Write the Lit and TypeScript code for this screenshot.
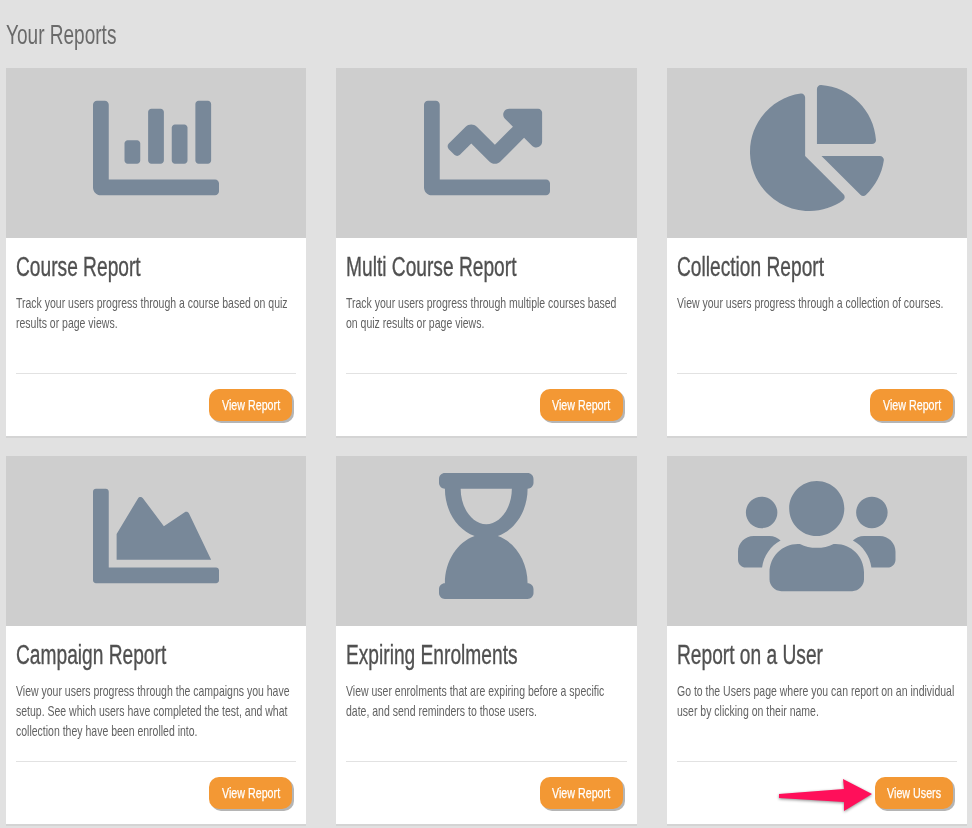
import { LitElement, html, css, svg } from "lit";
import { customElement } from "lit/decorators.js";

const ICONS: Record<string, { vb: number; d: string }> = {
  bar: { vb: 512, d: "M332.8 320h38.4c6.4 0 12.8-6.4 12.8-12.8V172.8c0-6.4-6.4-12.8-12.8-12.8h-38.4c-6.4 0-12.8 6.4-12.8 12.8v134.4c0 6.4 6.4 12.8 12.8 12.8zm96 0h38.4c6.4 0 12.8-6.4 12.8-12.8V76.8c0-6.4-6.4-12.8-12.8-12.8h-38.4c-6.4 0-12.8 6.4-12.8 12.8v230.4c0 6.4 6.4 12.8 12.8 12.8zm-288 0h38.4c6.4 0 12.8-6.4 12.8-12.8v-70.4c0-6.4-6.4-12.8-12.8-12.8h-38.4c-6.4 0-12.8 6.4-12.8 12.8v70.4c0 6.4 6.4 12.8 12.8 12.8zm96 0h38.4c6.4 0 12.8-6.4 12.8-12.8V108.8c0-6.4-6.4-12.8-12.8-12.8h-38.4c-6.4 0-12.8 6.4-12.8 12.8v198.4c0 6.4 6.4 12.8 12.8 12.8zM496 384H64V80c0-8.84-7.16-16-16-16H16C7.16 64 0 71.16 0 80v336c0 17.67 14.33 32 32 32h464c8.84 0 16-7.16 16-16v-32c0-8.84-7.16-16-16-16z" },
  line: { vb: 512, d: "M496 384H64V80c0-8.84-7.16-16-16-16H16C7.16 64 0 71.16 0 80v336c0 17.67 14.33 32 32 32h464c8.84 0 16-7.16 16-16v-32c0-8.84-7.16-16-16-16zM464 96H345.94c-21.38 0-32.09 25.85-16.97 40.97l32.4 32.4L288 242.75l-73.37-73.37c-12.5-12.5-32.76-12.5-45.25 0l-68.69 68.69c-6.25 6.25-6.25 16.38 0 22.63l22.62 22.62c6.25 6.25 16.38 6.25 22.63 0L192 237.25l73.37 73.37c12.5 12.5 32.76 12.5 45.25 0l96-96 32.4 32.4c15.12 15.12 40.97 4.41 40.97-16.97V112c.01-8.84-7.15-16-15.99-16z" },
  pie: { vb: 544, d: "M527.79 288H290.5l158.03 158.03c6.04 6.04 15.98 6.53 22.19.68 38.7-36.46 65.32-85.61 73.13-140.86 1.34-9.46-6.51-17.85-16.06-17.85zm-15.83-64.8C503.72 103.74 408.26 8.28 288.8.04 279.68-.59 272 7.1 272 16.24V240h223.77c9.14 0 16.82-7.68 16.19-16.8zM224 288V50.71c0-9.55-8.39-17.4-17.84-16.06C86.99 51.49-4.1 155.6.14 280.37 4.5 408.51 114.83 513.59 243.03 511.98c50.4-.63 96.97-16.87 135.26-44.03 7.9-5.6 8.42-17.23 1.57-24.08L224 288z" },
  area: { vb: 512, d: "M500 384c6.6 0 12 5.4 12 12v40c0 6.6-5.4 12-12 12H12c-6.6 0-12-5.4-12-12V76c0-6.6 5.4-12 12-12h40c6.6 0 12 5.4 12 12v308h436zM372.7 159.5L288 216l-85.3-113.7c-5.1-6.8-15.5-6.3-19.9 1L96 248v104h384l-89.9-187.8c-3.2-6.5-11.4-8.7-17.4-4.7z" },
  hourglass: { vb: 384, d: "M360 64c13.255 0 24-10.745 24-24V24c0-13.255-10.745-24-24-24H24C10.745 0 0 10.745 0 24v16c0 13.255 10.745 24 24 24 0 90.965 51.016 167.734 120.842 192C75.016 280.266 24 357.035 24 448c-13.255 0-24 10.745-24 24v16c0 13.255 10.745 24 24 24h336c13.255 0 24-10.745 24-24v-16c0-13.255-10.745-24-24-24 0-90.965-51.016-167.734-120.842-192C308.984 231.734 360 154.965 360 64zM192 208c-57.787 0-104-66.518-104-144h208c0 77.945-46.51 144-104 144z" },
  users: { vb: 640, d: "M96 224c35.3 0 64-28.7 64-64s-28.7-64-64-64-64 28.7-64 64 28.7 64 64 64zm448 0c35.3 0 64-28.7 64-64s-28.7-64-64-64-64 28.7-64 64 28.7 64 64 64zm32 32h-64c-17.6 0-33.5 7.1-45.1 18.6 40.3 22.1 68.9 62 75.1 109.4h66c17.7 0 32-14.3 32-32v-32c0-35.3-28.7-64-64-64zm-256 0c61.9 0 112-50.1 112-112S381.9 32 320 32 208 82.1 208 144s50.1 112 112 112zm76.8 32h-8.3c-20.8 10-43.9 16-68.5 16s-47.6-6-68.5-16h-8.3C179.6 288 128 339.6 128 403.2V432c0 26.5 21.5 48 48 48h288c26.5 0 48-21.5 48-48v-28.8c0-63.6-51.6-115.2-115.2-115.2zm-223.7-13.4C161.5 263.1 145.6 256 128 256H64c-35.3 0-64 28.7-64 64v32c0 17.7 14.3 32 32 32h65.9c6.3-47.4 34.9-87.3 75.2-109.4z" },
};

const CARDS = [
  { icon: "bar", title: "Course Report", text: "Track your users progress through a course based on quiz results or page views.", action: "View Report", w: 83 },
  { icon: "line", title: "Multi Course Report", text: "Track your users progress through multiple courses based on quiz results or page views.", action: "View Report", w: 83 },
  { icon: "pie", title: "Collection Report", text: "View your users progress through a collection of courses.", action: "View Report", w: 83 },
  { icon: "area", title: "Campaign Report", text: "View your users progress through the campaigns you have setup. See which users have completed the test, and what collection they have been enrolled into.", action: "View Report", w: 83 },
  { icon: "hourglass", title: "Expiring Enrolments", text: "View user enrolments that are expiring before a specific date, and send reminders to those users.", action: "View Report", w: 83 },
  { icon: "users", title: "Report on a User", text: "Go to the Users page where you can report on an individual user by clicking on their name.", action: "View Users", w: 78 },
];

@customElement("app-root")
export class AppRoot extends LitElement {
  static styles = css`
    :host {
      display: block;
      position: relative;
      height: 828px;
      overflow: hidden;
      background: #e1e1e1;
      font-family: "Liberation Sans", Arial, sans-serif;
    }
    h1 {
      margin: 0;
      padding: 19px 0 0 6px;
      height: 68px;
      box-sizing: border-box;
      font-size: 28px;
      line-height: 32px;
      font-weight: 400;
      color: #6a6a6a;
    }
    h1 span {
      display: inline-block;
      white-space: nowrap;
      transform: scaleX(0.68);
      transform-origin: left center;
    }
    .grid {
      display: grid;
      grid-template-columns: repeat(3, 300.45px);
      column-gap: 30px;
      row-gap: 20px;
      padding: 0 0 0 6px;
    }
    .card {
      display: flex;
      flex-direction: column;
      height: 368px;
      background: #fff;
      box-shadow: 0 2px 0 #d4d4d4;
    }
    .pic {
      height: 170px;
      padding-top: 17px;
      box-sizing: border-box;
      background: #cecece;
      display: flex;
      justify-content: center;
      align-items: flex-start;
    }
    .pic svg {
      height: 126px;
      fill: #788899;
      display: block;
    }
    .body {
      flex: 1;
      min-width: 0;
      display: flex;
      flex-direction: column;
      padding: 0 10px;
    }
    h2 {
      margin: 14px 0 0;
      font-size: 27px;
      line-height: 30px;
      font-weight: 400;
      color: #505050;
      white-space: nowrap;
      -webkit-text-stroke: 0.35px #505050;
      transform: scaleX(0.71);
      transform-origin: left center;
    }
    p {
      margin: 11px 0 0;
      width: 142.86%;
      font-size: 15px;
      line-height: 20px;
      color: #626262;
      transform: scaleX(0.7);
      transform-origin: left center;
    }
    .foot {
      margin-top: auto;
      height: 63px;
      box-sizing: border-box;
      border-top: 1px solid #e2e2e2;
      padding: 15px 4px 0 0;
      display: flex;
      justify-content: flex-end;
      align-items: flex-start;
    }
    .btn {
      height: 32px;
      box-sizing: border-box;
      display: flex;
      align-items: center;
      justify-content: center;
      background: #f39834;
      color: #fff;
      border-radius: 10px;
      font-size: 15.5px;
      white-space: nowrap;
      box-shadow: 2px 2px 0 #b5b5b5;
    }
    .btn span {
      display: block;
      flex: none;
      -webkit-text-stroke: 0.25px #fff;
      transform: scaleX(0.69);
    }
    .arrow {
      position: absolute;
      left: 776px;
      top: 776px;
      width: 100px;
      height: 40px;
      filter: drop-shadow(0 1px 1.5px rgba(0, 0, 0, 0.45));
    }
  `;

  render() {
    return html`
      <h1><span>Your Reports</span></h1>
      <div class="grid">
        ${CARDS.map((c) => {
          const ic = ICONS[c.icon];
          return html`
            <div class="card">
              <div class="pic">
                <svg viewBox="0 0 ${ic.vb} 512" style="width:${(126 * ic.vb) / 512}px">${svg`<path d=${ic.d}></path>`}</svg>
              </div>
              <div class="body">
                <h2>${c.title}</h2>
                <p>${c.text}</p>
                <div class="foot"><div class="btn" style="width:${c.w}px"><span>${c.action}</span></div></div>
              </div>
            </div>
          `;
        })}
      </div>
      <svg class="arrow" viewBox="0 0 100 40">
        <path d="M3 18 L68 13 L67 3 L96 18 L68 35 L68 26 L3 22 Z" fill="#ff0f5a"></path>
      </svg>
    `;
  }
}
